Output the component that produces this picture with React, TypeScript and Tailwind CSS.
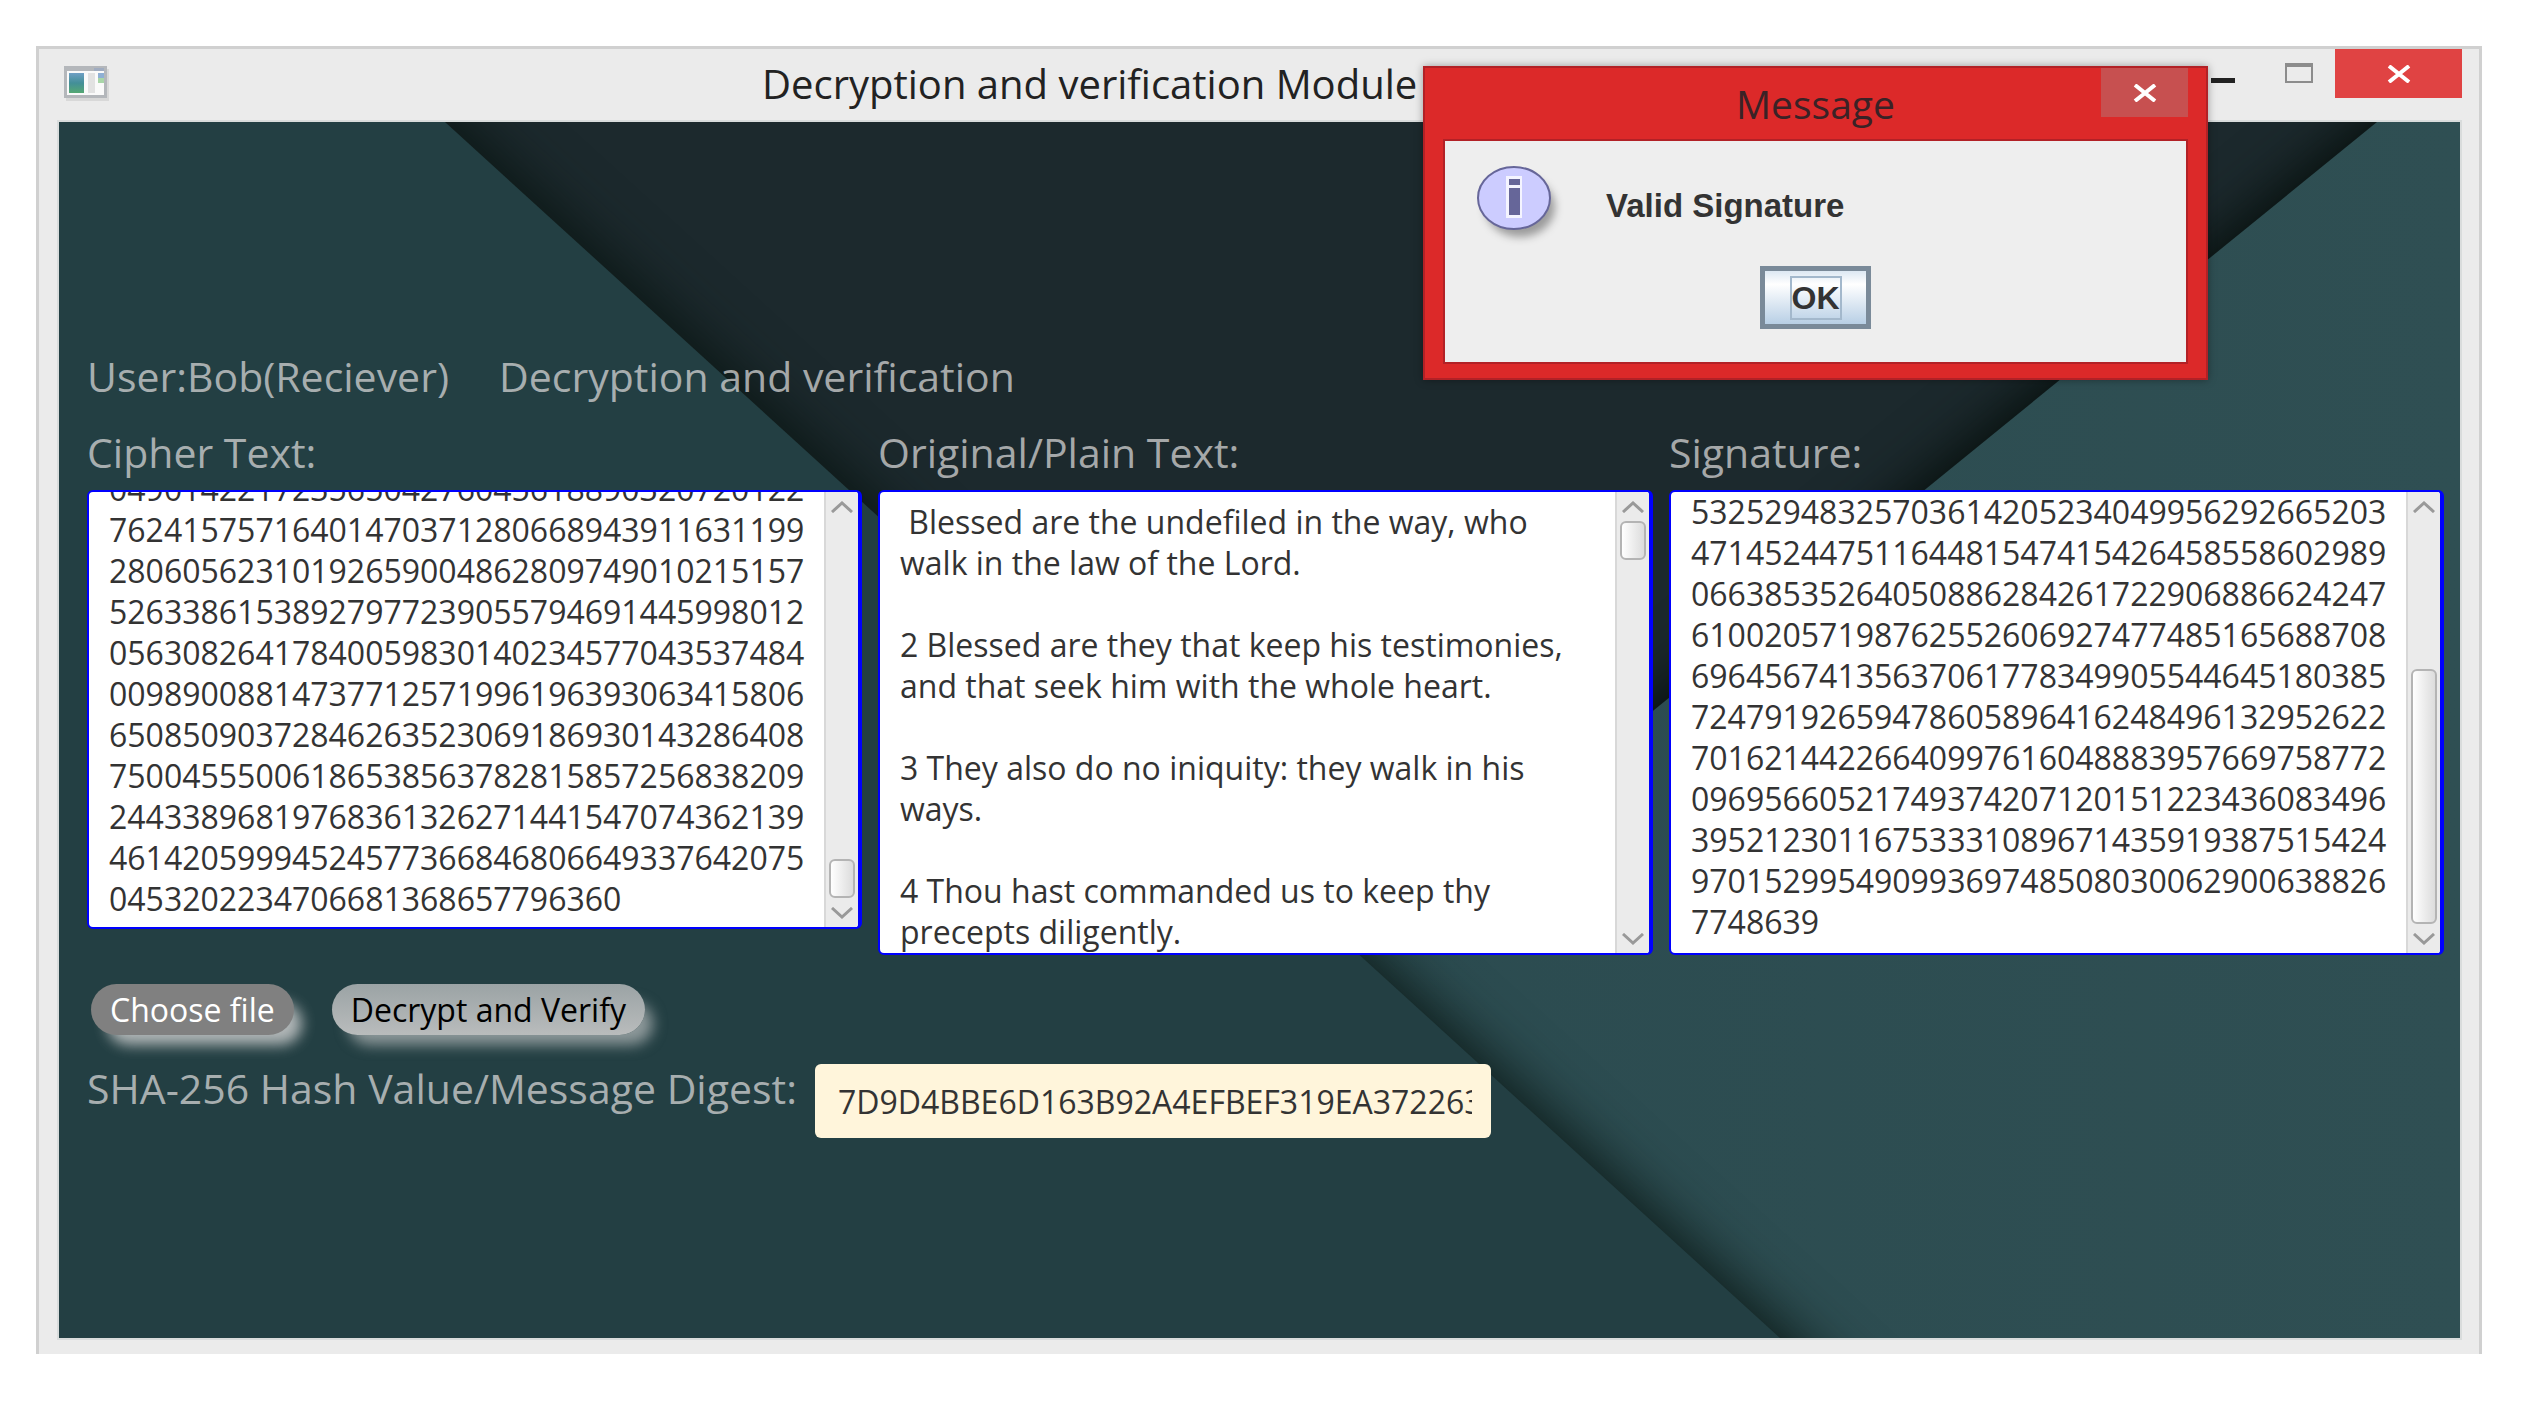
import { useEffect, useRef } from "react";

const cipherText = `04901422172356504276045618890320720122
76241575716401470371280668943911631199
28060562310192659004862809749010215157
52633861538927977239055794691445998012
05630826417840059830140234577043537484
00989008814737712571996196393063415806
65085090372846263523069186930143286408
75004555006186538563782815857256838209
24433896819768361326271441547074362139
46142059994524577366846806649337642075
0453202234706681368657796360`;

const plainText = ` Blessed are the undefiled in the way, who
walk in the law of the Lord.

2 Blessed are they that keep his testimonies,
and that seek him with the whole heart.

3 They also do no iniquity: they walk in his
ways.

4 Thou hast commanded us to keep thy
precepts diligently.`;

const signatureText = `53252948325703614205234049956292665203
47145244751164481547415426458558602989
06638535264050886284261722906886624247
61002057198762552606927477485165688708
69645674135637061778349905544645180385
72479192659478605896416248496132952622
70162144226640997616048883957669758772
09695660521749374207120151223436083496
39521230116753331089671435919387515424
97015299549099369748508030062900638826
7748639`;

function Backdrop() {
  return (
    <svg
      className="absolute inset-0 h-full w-full"
      viewBox="0 0 2401 1218"
      preserveAspectRatio="none"
      aria-hidden="true"
    >
      <defs>
        <filter id="soft" x="-20%" y="-20%" width="140%" height="140%" colorInterpolationFilters="sRGB">
          <feGaussianBlur stdDeviation="28" />
        </filter>
        <linearGradient id="rightPanel" x1="0" y1="0" x2="1" y2="0">
          <stop offset="0" stopColor="#2a4a4f" />
          <stop offset="1" stopColor="#2f4f53" />
        </linearGradient>
      </defs>
      <rect width="2401" height="1218" fill="#1c292d" />
      <polygon
        points="2379,-60 2600,-60 2600,1300 710,1300"
        fill="#050e0b"
        filter="url(#soft)"
      />
      <polygon points="2318,0 2401,0 2401,1218 823,1218" fill="url(#rightPanel)" />
      <polygon
        points="-60,-60 334,-60 1825,1300 -60,1300"
        fill="#07130f"
        fillOpacity="0.85"
        filter="url(#soft)"
      />
      <polygon points="0,0 386,0 1721,1218 0,1218" fill="#233f43" />
    </svg>
  );
}

function Chevron({ up }: { up?: boolean }) {
  return (
    <svg width="22" height="12" viewBox="0 0 22 12" fill="none" aria-hidden="true">
      <path
        d={up ? "M1 11L11 2L21 11" : "M1 1L11 10L21 1"}
        stroke="#999"
        strokeWidth="3"
      />
    </svg>
  );
}

function Cross() {
  return (
    <svg width="24" height="18" viewBox="0 0 24 18" fill="none" aria-hidden="true">
      <path d="M2 1L22 17M22 1L2 17" stroke="#fff" strokeWidth="4" />
    </svg>
  );
}

type PaneProps = {
  id: string;
  label: string;
  text: string;
  boxClass: string;
  padClass: string;
  trackClass: string;
  thumbClass: string;
  toEnd?: boolean;
};

function Pane({ id, label, text, boxClass, padClass, trackClass, thumbClass, toEnd }: PaneProps) {
  const area = useRef<HTMLTextAreaElement>(null);
  useEffect(() => {
    if (toEnd && area.current) area.current.scrollTop = area.current.scrollHeight;
  }, [toEnd]);
  return (
    <div className="flex min-w-0 flex-col gap-[14px]">
      <label htmlFor={id} className="text-[41px] leading-12 whitespace-nowrap text-[#d3d3d3]/75">
        {label}
      </label>
      <div
        className={`flex overflow-hidden rounded-md border-2 border-r-4 border-[#0000ff] bg-white ${boxClass}`}
      >
        <textarea
          id={id}
          ref={area}
          readOnly
          wrap="off"
          defaultValue={text}
          className={`min-w-0 flex-1 resize-none overflow-auto pl-5 text-[32px] leading-[41px] whitespace-pre text-[#333] outline-none [scrollbar-width:none] ${padClass}`}
        />
        <div className="flex w-[34px] flex-col border-l-2 border-[#d8d8d8] bg-[#ebebeb]">
          <button type="button" aria-label="Scroll up" className="flex h-[29px] items-center justify-center">
            <Chevron up />
          </button>
          <div className={`flex flex-1 flex-col items-center ${trackClass}`}>
            <div
              className={`w-[26px] rounded-md border-2 border-[#b4b4b4] bg-linear-to-r from-white to-[#dcdcdc] ${thumbClass}`}
            />
          </div>
          <button type="button" aria-label="Scroll down" className="flex h-[29px] items-center justify-center">
            <Chevron />
          </button>
        </div>
      </div>
    </div>
  );
}

function MessageDialog() {
  return (
    <div
      role="dialog"
      aria-labelledby="dialog-title"
      className="absolute top-[66px] right-[316px] flex w-[785px] flex-col border-2 border-[#b22126] bg-[#dc2929] px-[18px] pb-[14px] shadow-[0_0_8px_rgba(0,0,0,0.35)]"
    >
      <div className="relative flex h-[71px] items-center justify-center">
        <h2 id="dialog-title" className="text-[39px] leading-12 text-[#3a2226]">
          Message
        </h2>
        <button
          type="button"
          aria-label="Close message"
          className="absolute top-0 right-0 flex h-[49px] w-[87px] items-center justify-center bg-[#c75050]"
        >
          <Cross />
        </button>
      </div>
      <div className="flex h-[225px] flex-col border-2 border-[#b22126] bg-[#eee] px-[31px] pt-[25px]">
        <div className="flex h-16 items-start gap-[54px]">
          <svg width="76" height="76" viewBox="0 0 76 76" aria-hidden="true" className="shrink-0 overflow-visible">
            <defs>
              <filter id="drop" x="-30%" y="-30%" width="160%" height="160%">
                <feGaussianBlur stdDeviation="4" />
              </filter>
            </defs>
            <ellipse cx="44" cy="41" rx="35" ry="30" fill="#000" fillOpacity="0.35" filter="url(#drop)" />
            <ellipse cx="38" cy="32" rx="36" ry="31" fill="#ccccff" stroke="#666699" strokeWidth="2" />
            <path d="M30 10H46V52H30Z" fill="#f4f4ff" />
            <path d="M33 13H44V19H33ZM33 22H44V49H33Z" fill="#666699" />
          </svg>
          <p className="pt-5 font-['Liberation_Sans',sans-serif] text-[33px] leading-10 font-bold text-[#333]">
            Valid Signature
          </p>
        </div>
        <button
          type="button"
          className="mt-9 flex h-[63px] w-[111px] items-center justify-center self-center border-[5px] border-[#7a8a99] bg-linear-to-b from-[#dde8f3] via-white via-25% to-[#b8cfe5] font-['Liberation_Sans',sans-serif] text-[32px] leading-10 font-bold text-[#333]"
        >
          <span className="border-2 border-[#a3b8cc]">OK</span>
        </button>
      </div>
    </div>
  );
}

export default function App() {
  return (
    <div className="relative flex min-h-screen flex-col bg-white pt-[46px] pr-[42px] pb-[47px] pl-9 font-['Open_Sans',sans-serif]">
      <div className="flex flex-1 flex-col border-x-[3px] border-t-[3px] border-[#d0d0d0] bg-[#ebebeb]">
        <header className="flex h-[71px] items-start">
          <svg width="46" height="36" viewBox="0 0 46 36" className="mt-[17px] ml-[25px] shrink-0" aria-hidden="true">
            <defs>
              <linearGradient id="thumbnail" x1="0" y1="0" x2="0" y2="1">
                <stop offset="0" stopColor="#6f9fc4" />
                <stop offset="0.5" stopColor="#438f98" />
                <stop offset="1" stopColor="#55a873" />
              </linearGradient>
            </defs>
            <rect x="2" y="3" width="43" height="32" fill="#d8d8d8" />
            <rect width="43" height="32" fill="#b4b7bb" />
            <rect x="30" y="2" width="10" height="3" fill="#a0acc0" />
            <rect x="3" y="5" width="37" height="24" fill="#fafafa" />
            <rect x="5" y="7" width="15" height="20" fill="url(#thumbnail)" />
            <rect x="24" y="7" width="7" height="20" fill="#e2e2e2" />
            <rect x="34" y="7" width="6" height="5" fill="#8fb0d4" />
            <rect x="34" y="12" width="6" height="5" fill="#a9d6a8" />
          </svg>
          <h1 className="ml-[652px] pt-[11px] text-[40px] leading-12 whitespace-nowrap text-[#222]">
            Decryption and verification Module
          </h1>
          <div className="mr-[17px] ml-auto flex h-[49px]">
            <button type="button" aria-label="Minimize" className="flex w-[74px] items-end pb-[15px]">
              <span className="h-[5px] w-6 bg-[#222]" />
            </button>
            <button type="button" aria-label="Maximize" className="flex w-[50px] items-start pt-[14px]">
              <span className="h-5 w-7 border-2 border-t-4 border-[#8c8c8c]" />
            </button>
            <button
              type="button"
              aria-label="Close"
              className="flex w-[127px] items-center justify-center bg-[#e04343]"
            >
              <Cross />
            </button>
          </div>
        </header>

        <main className="relative mr-[17px] mb-[14px] ml-[18px] flex-1 border-2 border-[#d9dcdc]">
          <Backdrop />
          <div className="relative pt-[230px] pr-4 pb-8 pl-7">
            <div className="flex gap-[50px] text-[41px] leading-12 whitespace-nowrap text-[#d3d3d3]/75">
              <p>User:Bob(Reciever)</p>
              <p>Decryption and verification</p>
            </div>

            <div className="mt-7 grid grid-cols-3 items-start gap-4">
              <Pane
                id="cipher"
                label="Cipher Text:"
                text={cipherText}
                boxClass="h-[439px]"
                padClass="pb-2"
                trackClass="justify-end"
                thumbClass="h-[39px]"
                toEnd
              />
              <Pane
                id="plain"
                label="Original/Plain Text:"
                text={plainText}
                boxClass="h-[465px]"
                padClass="pt-[9px]"
                trackClass="justify-start"
                thumbClass="h-[39px]"
              />
              <Pane
                id="signature"
                label="Signature:"
                text={signatureText}
                boxClass="h-[465px]"
                padClass="pt-[9px] pb-[11px]"
                trackClass="justify-end"
                thumbClass="h-[255px]"
                toEnd
              />
            </div>

            <div className="mt-[29px] ml-1 flex gap-[38px] text-[32px] leading-[51px]">
              <button
                type="button"
                className="rounded-full bg-[#808080] px-[19px] text-white shadow-[12px_14px_14px_-4px_rgba(211,211,211,0.8)]"
              >
                Choose file
              </button>
              <button
                type="button"
                className="rounded-full bg-linear-to-b from-[#9ba3a5] to-[#b9bcbc] px-[19px] text-black shadow-[12px_14px_14px_-4px_rgba(211,211,211,0.6)]"
              >
                Decrypt and Verify
              </button>
            </div>

            <div className="mt-[29px] flex items-start gap-[18px]">
              <label htmlFor="digest" className="text-[41px] leading-12 whitespace-nowrap text-[#d3d3d3]/75">
                SHA-256 Hash Value/Message Digest:
              </label>
              <div className="flex h-[74px] w-[676px] items-center rounded-md bg-[#fff5db] pr-[19px] pl-[23px]">
                <input
                  id="digest"
                  readOnly
                  defaultValue="7D9D4BBE6D163B92A4EFBEF319EA372263"
                  className="w-full min-w-0 text-[32px] leading-[41px] text-[#333] outline-none"
                />
              </div>
            </div>
          </div>
        </main>
      </div>
      <MessageDialog />
    </div>
  );
}
